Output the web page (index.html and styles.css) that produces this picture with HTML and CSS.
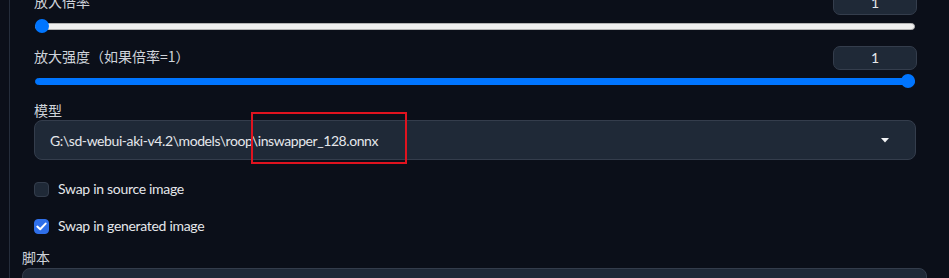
FILE: index.html
```html
<!DOCTYPE html>
<html>
<head>
<meta charset="utf-8">
<link rel="stylesheet" href="styles.css">
</head>
<body>
<div class="frame">
  <div class="panel">
    <div class="block first">
      <div class="head"><span class="label">放大倍率</span><div class="num">1</div></div>
      <div class="slider"><div class="track"><div class="thumb"></div></div></div>
    </div>
    <div class="block gap13">
      <div class="head"><span class="label">放大强度（如果倍率=1）</span><div class="num">1</div></div>
      <div class="slider"><div class="track full"><div class="thumb"></div></div></div>
    </div>
    <div class="block gap12">
      <div class="label">模型</div>
      <div class="dropdown">
        <span class="value">G:\sd-webui-aki-v4.2\models\roop\inswapper_128.onnx</span>
        <svg class="caret" width="8" height="5" viewBox="0 0 8 5"><path d="M0 0H8L4 4.5Z" fill="#f3f4f6"/></svg>
      </div>
    </div>
    <div class="check gap19">
      <span class="box"></span><span class="ctext">Swap in source image</span>
    </div>
    <div class="check gap17">
      <span class="box on"><svg width="11" height="9" viewBox="0 0 11 9"><path d="M1.3 4.6L4.2 7.3L9.6 1.6" fill="none" stroke="#fff" stroke-width="2" stroke-linecap="round" stroke-linejoin="round"/></svg></span><span class="ctext">Swap in generated image</span>
    </div>
  </div>
  <div class="label outer">脚本</div>
  <div class="scriptbox"></div>
</div>
<div class="annot"></div>
</body>
</html>
```
FILE: styles.css
```css
html, body {
  margin: 0;
  padding: 0;
  background: #0b0f19;
  height: 278px;
  overflow: hidden;
  font-family: "Lato", "Noto Sans CJK SC", sans-serif;
  font-size: 14px;
  color: #e5e7eb;
}
.frame {
  margin-left: 9px;
  height: 300px;
  border-left: 1px solid #252d3b;
  padding-left: 12px;
  box-sizing: border-box;
  width: 919px;
}
.panel {
  padding: 0 12px;
}
.block { display: flex; flex-direction: column; }
.first { margin-top: -9px; }
.gap13 { margin-top: 13px; }
.gap12 { margin-top: 12px; }
.gap19 { margin-top: 19px; }
.gap17 { margin-top: 17px; }
.head {
  display: flex;
  justify-content: space-between;
  align-items: flex-start;
  height: 24px;
}
.label {
  font-family: "Noto Sans CJK SC", "Lato", sans-serif;
  font-size: 14px;
  line-height: 20px;
  color: #cfd3da;
}
.num {
  width: 84px;
  height: 24px;
  box-sizing: border-box;
  border: 1px solid #343d4c;
  border-radius: 7px;
  background: #1f2937;
  text-align: center;
  line-height: 22px;
  font-size: 14px;
  color: #e5e7eb;
  margin-right: -1px;
}
.slider {
  margin-top: 4px;
  height: 14px;
  display: flex;
  align-items: center;
  padding: 0 1px;
}
.track {
  flex: 1;
  height: 7px;
  box-sizing: border-box;
  border-radius: 4px;
  background: #efefef;
  border: 1px solid #b5b5b5;
  display: flex;
  align-items: center;
}
.track.full {
  background: #0075ff;
  border-color: #0075ff;
  justify-content: flex-end;
}
.thumb {
  flex: none;
  width: 14px;
  height: 14px;
  border-radius: 50%;
  background: #0075ff;
  margin: 0 -1px;
}
.dropdown {
  height: 40px;
  box-sizing: border-box;
  border: 1px solid #343d4c;
  border-radius: 8px;
  background: #1f2937;
  display: flex;
  align-items: center;
  justify-content: space-between;
  padding: 0 26px 0 15px;
}
.value {
  font-size: 14px;
  letter-spacing: -0.42px;
  color: #e5e7eb;
}
.caret { display: block; }
.check {
  display: flex;
  align-items: center;
  height: 20px;
  gap: 9px;
}
.box {
  width: 15px;
  height: 15px;
  box-sizing: border-box;
  border-radius: 4px;
  background: #1f2937;
  border: 1px solid #343d4c;
  display: flex;
  align-items: center;
  justify-content: center;
}
.box.on {
  background: #2f6fe9;
  border-color: #2f6fe9;
}
.ctext {
  font-size: 14px;
  letter-spacing: -0.3px;
  color: #e5e7eb;
  line-height: 20px;
}
.outer {
  margin-top: 11px;
}
.scriptbox {
  margin-top: 1px;
  height: 40px;
  border: 1px solid #343d4c;
  border-radius: 8px;
  background: #1f2937;
  margin-right: 1px;
}
.annot {
  position: absolute;
  left: 251px;
  top: 112px;
  width: 156px;
  height: 52px;
  box-sizing: border-box;
  border: 2px solid #e0131f;
}
```
